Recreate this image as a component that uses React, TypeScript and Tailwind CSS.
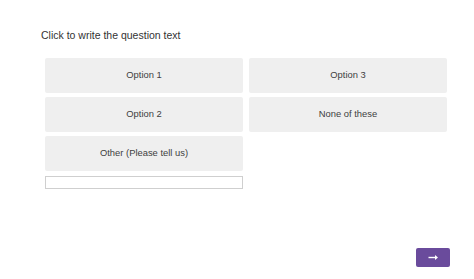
export default function App() {
  const options = ['Option 1', 'Option 3', 'Option 2', 'None of these', 'Other (Please tell us)'];

  return (
    <div className="w-[474px] h-[279px] bg-white text-[#3a3a3a]" style={{ fontFamily: '"Liberation Sans", Arial, sans-serif' }}>
      <div className="pt-[28.5px] pl-[41px] text-[10.5px] leading-[12px] text-[#333]">
        Click to write the question text
      </div>

      <div className="mt-[17.5px] ml-[45px] w-[402px] grid grid-cols-[198px_198px] gap-x-[6px] gap-y-[4px]">
        {options.map((o) => (
          <div
            key={o}
            className="h-[35px] rounded-[2px] bg-[#efefef] flex items-center justify-center text-[9.4px] text-[#404040]"
          >
            {o}
          </div>
        ))}
      </div>

      <div className="ml-[45px] mt-[5px] w-[198px] h-[13px] border border-[#cfcfcf] bg-white" />

      <div className="mt-[59px] pr-[24px] flex justify-end">
        <button className="w-[34px] h-[19px] rounded-[2px] bg-[#6a4b9c] flex items-center justify-center">
          <svg width="11" height="7" viewBox="0 0 11 7">
            <path d="M0.5 3.5H8.5" stroke="white" strokeWidth="1.4" />
            <path d="M7 1L10 3.5L7 6Z" fill="white" />
          </svg>
        </button>
      </div>
    </div>
  );
}
